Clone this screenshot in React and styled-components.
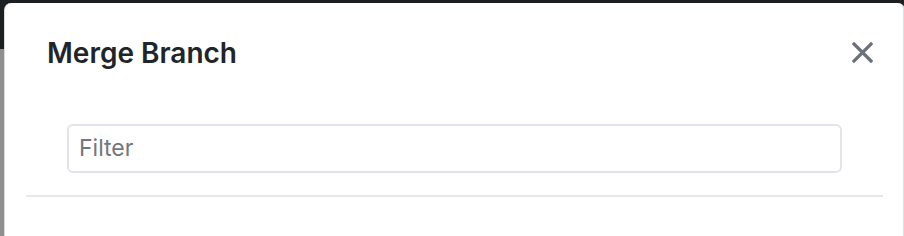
import React from "react";
import styled, { createGlobalStyle } from "styled-components";

const GlobalStyle = createGlobalStyle`
  html, body {
    margin: 0;
    padding: 0;
    background: #8f8f8f;
  }
  body {
    font-family: Inter, "Noto Sans", "Liberation Sans", sans-serif;
  }
`;

const Page = styled.div`
  position: relative;
  width: 904px;
  height: 236px;
  overflow: hidden;
  background: #8f8f8f;
`;

const AppHeader = styled.div`
  height: 49px;
  background: #1d2023;
`;

const Modal = styled.div`
  position: absolute;
  top: 3px;
  left: 4px;
  width: 898px;
  height: 260px;
  background: #fff;
  border-left: 1px solid #d9dcdf;
  border-right: 2px solid #dde1e5;
  border-radius: 7px 7px 0 0;
  display: flex;
  flex-direction: column;
`;

const Header = styled.div`
  display: flex;
  align-items: center;
  justify-content: space-between;
  padding: 28px 30px 0 42px;
  height: 43px;
`;

const Title = styled.h5`
  margin: 0;
  font-size: 28px;
  font-weight: 600;
  color: #212529;
`;

const CloseButton = styled.button`
  border: none;
  background: none;
  padding: 0;
  width: 21px;
  height: 21px;
  display: flex;
  cursor: pointer;
`;

const Body = styled.div`
  padding: 50px 60px 0 62px;
`;

const FilterInput = styled.input`
  box-sizing: border-box;
  width: 775px;
  height: 49px;
  border: 2px solid #e1e4e8;
  border-radius: 6px;
  padding: 0 12px 2px 10px;
  font-family: inherit;
  font-size: 23px;
  color: #495057;
  outline: none;
  &::placeholder {
    color: #71777e;
  }
`;

const Divider = styled.hr`
  margin: 22px 20px 0 21px;
  border: none;
  height: 2px;
  background: #e4e7eb;
`;

const SectionLabel = styled.div`
  padding: 37px 0 0 78px;
  font-size: 20px;
  line-height: 24px;
  font-weight: 600;
  color: #8a9097;
`;

export default function App() {
  return (
    <Page>
      <GlobalStyle />
      <AppHeader />
      <Modal>
        <Header>
          <Title>Merge Branch</Title>
          <CloseButton aria-label="Close">
            <svg width="21" height="21" viewBox="0 0 21 21">
              <path
                d="M2 2 L19 19 M19 2 L2 19"
                stroke="#6b7179"
                strokeWidth="3.2"
                strokeLinecap="square"
              />
            </svg>
          </CloseButton>
        </Header>
        <Body>
          <FilterInput placeholder="Filter" />
        </Body>
        <Divider />
        <SectionLabel>Local Branches</SectionLabel>
      </Modal>
    </Page>
  );
}
